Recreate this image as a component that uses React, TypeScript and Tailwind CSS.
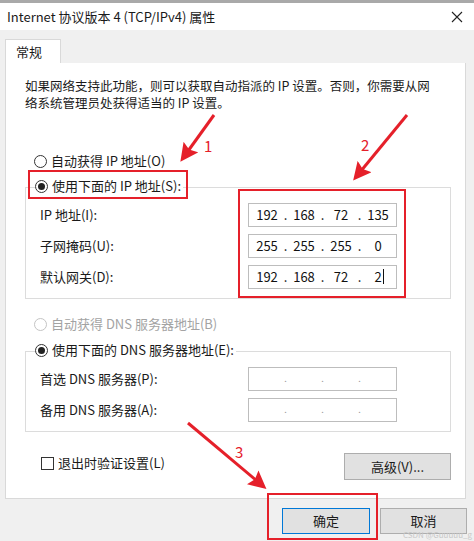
import React from "react";

const font = { fontFamily: '"Noto Sans CJK SC", "Noto Sans", sans-serif' };

const Radio = ({ checked, disabled }: { checked?: boolean; disabled?: boolean }) => (
    <span
        className={`w-[13px] h-[13px] rounded-full border flex items-center justify-center bg-white ${
            disabled ? "border-[#c4c4c4]" : "border-[#333333]"
        }`}
    >
        {checked && <span className="w-[7px] h-[7px] rounded-full bg-[#222222]" />}
    </span>
);

const IpInput = ({ parts, caret }: { parts?: string[]; caret?: boolean }) => (
    <div className="w-[149px] h-[24px] border border-[#bdbdbd] bg-white flex items-center pl-[2px] text-[13px] text-[#111111]">
        {[0, 1, 2, 3].map((i) => (
            <React.Fragment key={i}>
                <span className="w-[32px] text-center relative">
                    {parts ? parts[i] : ""}
                    {caret && i === 3 && (
                        <span className="absolute top-[2px] left-[21px] w-px h-[15px] bg-[#111111]" />
                    )}
                </span>
                {i < 3 && (
                    <span className={`w-[5px] text-center ${parts ? "" : "text-[#9a9a9a] text-[9px]"}`}>.</span>
                )}
            </React.Fragment>
        ))}
    </div>
);

const Row = ({ label, children }: { label: string; children: React.ReactNode }) => (
    <div className="flex items-center h-[24px]">
        <span className="w-[222px] pl-[14px] text-[13px]">{label}</span>
        {children}
    </div>
);

// red annotation arrows
const Arrows = () => (
    <svg className="absolute inset-0 pointer-events-none" width="474" height="541">
        <defs>
            <marker id="head" markerWidth="6" markerHeight="6" refX="4.5" refY="3" orient="auto">
                <path d="M0,0 L6,3 L0,6 L1,3 Z" fill="#e5202a" />
            </marker>
        </defs>
        <line x1="214" y1="115" x2="183" y2="158" stroke="#e5202a" strokeWidth="3" markerEnd="url(#head)" />
        <line x1="407" y1="115" x2="356" y2="177" stroke="#e5202a" strokeWidth="3" markerEnd="url(#head)" />
        <line x1="188" y1="423" x2="263" y2="486" stroke="#e5202a" strokeWidth="3" markerEnd="url(#head)" />
    </svg>
);

export default function App() {
    return (
        <div className="relative w-[474px] h-[541px] overflow-hidden bg-[#f0f0f0] text-[#1a1a1a]" style={font}>
            <div className="h-[3px] bg-[#a9a9a9]" />
            <div className="h-[27px] bg-white flex items-center justify-between pl-[7px] pr-[11px]">
                <span className="text-[13px]">Internet 协议版本 4 (TCP/IPv4) 属性</span>
                <svg width="12" height="12" viewBox="0 0 12 12">
                    <path d="M1 1 L11 11 M11 1 L1 11" stroke="#222" strokeWidth="1.1" />
                </svg>
            </div>

            <div className="pl-[5px] pt-[9px]">
                <div className="w-[56px] h-[24px] bg-white border border-b-0 border-[#d9d9d9] text-[13px] pl-[10px] pt-[2px]">
                    常规
                </div>
                <div className="w-[461px] h-[436px] bg-white border border-[#d9d9d9] border-t-0 pt-[14px]">
                    <p className="pl-[19px] pr-[30px] text-[12.5px] leading-[17px]">
                        如果网络支持此功能，则可以获取自动指派的 IP 设置。否则，你需要从网络系统管理员处获得适当的 IP 设置。
                    </p>

                    <div className="mt-[38px] ml-[28px] h-[24px] flex items-center gap-[4px] text-[13px]">
                        <Radio />
                        <span>自动获得 IP 地址(O)</span>
                    </div>

                    <div className="mt-[14px] ml-[19px] w-[426px] border border-[#dcdcdc] pb-[9px]">
                        <div className="-mt-[14px] ml-[9px] w-fit pr-[2px] h-[24px] bg-white flex items-center gap-[4px] text-[13px]">
                            <Radio checked />
                            <span>使用下面的 IP 地址(S):</span>
                        </div>
                        <div className="mt-[5px] flex flex-col gap-[7px]">
                            <Row label="IP 地址(I):">
                                <IpInput parts={["192", "168", "72", "135"]} />
                            </Row>
                            <Row label="子网掩码(U):">
                                <IpInput parts={["255", "255", "255", "0"]} />
                            </Row>
                            <Row label="默认网关(D):">
                                <IpInput parts={["192", "168", "72", "2"]} caret />
                            </Row>
                        </div>
                    </div>

                    <div className="mt-[13px] ml-[28px] h-[24px] flex items-center gap-[4px] text-[13px] text-[#a3a3a3]">
                        <Radio disabled />
                        <span>自动获得 DNS 服务器地址(B)</span>
                    </div>

                    <div className="mt-[15px] ml-[19px] w-[426px] border border-[#dcdcdc] pb-[9px]">
                        <div className="-mt-[14px] ml-[9px] w-fit pr-[2px] h-[24px] bg-white flex items-center gap-[4px] text-[13px]">
                            <Radio checked />
                            <span>使用下面的 DNS 服务器地址(E):</span>
                        </div>
                        <div className="mt-[5px] flex flex-col gap-[7px]">
                            <Row label="首选 DNS 服务器(P):">
                                <IpInput />
                            </Row>
                            <Row label="备用 DNS 服务器(A):">
                                <IpInput />
                            </Row>
                        </div>
                    </div>

                    <div className="mt-[21px] pl-[35px] pr-[14px] flex items-start justify-between">
                        <div className="mt-[1px] h-[18px] flex items-center gap-[4px] text-[13px]">
                            <span className="w-[13px] h-[13px] border border-[#333333] bg-white" />
                            <span>退出时验证设置(L)</span>
                        </div>
                        <button className="w-[107px] h-[27px] bg-[#e1e1e1] border border-[#adadad] text-[13px]">
                            高级(V)...
                        </button>
                    </div>
                </div>

                <div className="mt-[9px] pr-[7px] flex justify-end gap-[10px]">
                    <button className="w-[88px] h-[26px] bg-[#e1e1e1] border border-[#0078d7] text-[13px]">确定</button>
                    <button className="w-[87px] h-[26px] bg-[#e1e1e1] border border-[#adadad] text-[13px]">取消</button>
                </div>
            </div>

            {/* annotations */}
            <div className="absolute left-[28px] top-[170px] w-[160px] h-[29px] border-2 border-[#e5202a]" />
            <div className="absolute left-[238px] top-[189px] w-[168px] h-[109px] border-2 border-[#e5202a]" />
            <div className="absolute left-[267px] top-[493px] w-[111px] h-[47px] border-2 border-[#e5202a]" />
            <span className="absolute left-[204px] top-[135px] text-[15px] text-[#e5202a]">1</span>
            <span className="absolute left-[361px] top-[134px] text-[15px] text-[#e5202a]">2</span>
            <span className="absolute left-[235px] top-[441px] text-[15px] text-[#e5202a]">3</span>
            <Arrows />
            <span className="absolute right-[2px] top-[529px] text-[8px] text-[#c8c8c8]">CSDN @Guuuuu_g</span>
        </div>
    );
}
